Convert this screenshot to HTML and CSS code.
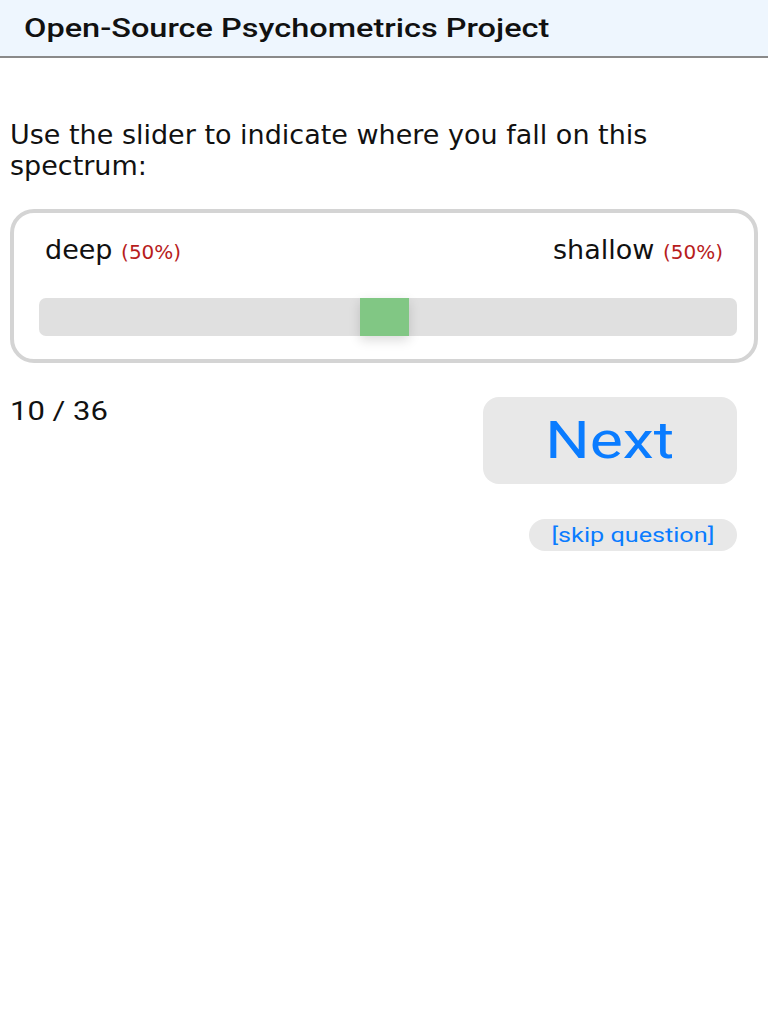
FILE: index.html
```html
<!DOCTYPE html>
<html lang="en">
<head>
    <meta charset="UTF-8">
    <meta name="viewport" content="width=device-width, initial-scale=1.0">
    <title>Open-Source Psychometrics Project</title>
    <link rel="stylesheet" href="styles.css">
</head>
<body>

<header class="top-bar">
    <h1 class="site-title"><span class="wide">Open-Source Psychometrics Project</span></h1>
</header>

<main class="quiz">
    <p class="prompt">Use the slider to indicate where you fall on this spectrum:</p>

    <div class="slider-box">
        <div class="labels">
            <span class="label">deep <span class="pct">(50%)</span></span>
            <span class="label">shallow <span class="pct">(50%)</span></span>
        </div>
        <div class="track">
            <div class="thumb" style="left: 50%;"></div>
        </div>
    </div>

    <div class="controls">
        <div class="counter"><span class="wide">10 / 36</span></div>
        <div class="actions">
            <button class="next-btn"><span class="wide">Next</span></button>
            <button class="skip-btn"><span class="wide">[skip question]</span></button>
        </div>
    </div>
</main>

</body>
</html>
```

FILE: styles.css
```css
body {
    font-family: "DejaVu Sans", "Open Sans", sans-serif;
    margin: 0;
    padding: 0;
    background-color: #fff;
    color: #111;
}
.wide {
    display: inline-block;
    transform: scaleX(1.2);
}
.top-bar {
    height: 56px;
    display: flex;
    align-items: center;
    padding: 0 24px;
    background-color: #eef6fe;
    border-bottom: 2px solid #8a8a8a;
}
.site-title {
    font-family: Roboto, sans-serif;
    font-size: 26px;
    font-weight: 500;
    margin: 0;
    color: #111;
}
.site-title .wide {
    transform: scaleX(1.25);
    transform-origin: left center;
}
.quiz {
    padding: 0 10px;
}
.prompt {
    font-size: 27px;
    line-height: 31px;
    margin: 61px 0 28px;
}
/* slider panel */
.slider-box {
    border: 4px solid #d4d4d4;
    border-radius: 24px;
    padding: 21px 17px 23px 25px;
}
.labels {
    display: flex;
    justify-content: space-between;
    padding: 0 14px 0 6px;
    height: 44px;
}
.label {
    font-size: 27px;
}
.pct {
    font-size: 20px;
    color: #b71c1c;
}
.track {
    position: relative;
    height: 38px;
    margin-top: 20px;
    background-color: #e0e0e0;
    border-radius: 7px;
}
.thumb {
    position: absolute;
    top: 0;
    width: 49px;
    height: 38px;
    margin-left: -28px;
    background-color: #81c784;
    box-shadow: 0 4px 12px rgba(0, 0, 0, 0.15);
}
.controls {
    display: flex;
    justify-content: space-between;
    align-items: flex-start;
    margin-top: 34px;
    padding-right: 21px;
}
.counter {
    font-family: Roboto, sans-serif;
    font-size: 25px;
}
.counter .wide {
    transform: scaleX(1.24);
    transform-origin: left center;
}
.actions {
    display: flex;
    flex-direction: column;
    align-items: flex-end;
}
.next-btn {
    width: 254px;
    height: 87px;
    border: none;
    border-radius: 16px;
    background-color: #e8e8e8;
    color: #0a7cff;
    font-family: Roboto, sans-serif;
    font-size: 52px;
    padding: 0;
    cursor: pointer;
}
.skip-btn {
    margin-top: 35px;
    width: 208px;
    height: 32px;
    border: none;
    border-radius: 16px;
    background-color: #e8e8e8;
    color: #0a7cff;
    font-family: Roboto, sans-serif;
    font-size: 21px;
    padding: 0;
    cursor: pointer;
}
```
